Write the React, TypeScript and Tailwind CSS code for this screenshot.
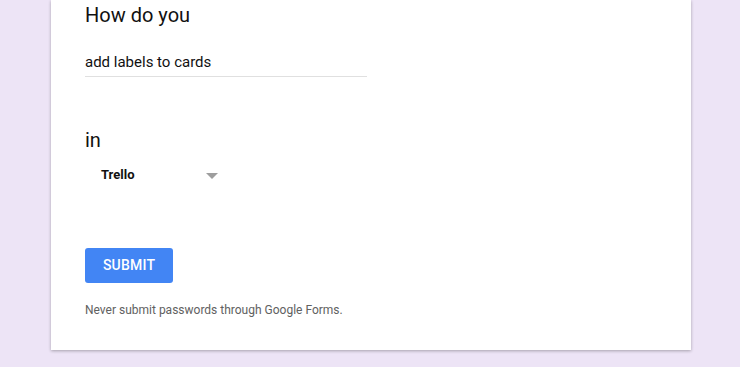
export default function App() {
  return (
    <div
      className="min-h-[367px] w-full bg-[#ede4f6] overflow-hidden"
      style={{ fontFamily: "Roboto, 'Liberation Sans', sans-serif" }}
    >
      <div className="ml-[51px] w-[640px] h-[350px] bg-white shadow-[0_1px_3px_rgba(0,0,0,0.3)] pl-[34px] flex flex-col">
        <div className="mt-[2px] h-[26px] text-[20px] leading-[26px] text-[#111]">How do you</div>
        <div className="mt-[22px] w-[282px] border-b border-[#e0e0e0] h-[27px]">
          <div className="text-[15px] leading-[24px] text-[#111]">add labels to cards</div>
        </div>
        <div className="mt-[50px] h-[26px] text-[20px] leading-[26px] text-[#111]">in</div>
        <div className="mt-[10px] h-[24px] flex items-center pl-[16px]">
          <span className="w-[105px] text-[13px] font-bold text-[#111]">Trello</span>
          <svg width="12" height="6" viewBox="0 0 12 6" className="mt-[1px]">
            <polygon points="0,0 12,0 6,6" fill="#9e9e9e" />
          </svg>
        </div>
        <button className="mt-[61px] w-[88px] h-[35px] rounded-[3px] bg-[#4285f4] text-white text-[14px] font-medium tracking-[0.2px]">
          SUBMIT
        </button>
        <div className="mt-[19px] text-[12px] leading-[16px] text-[#616161]">
          Never submit passwords through Google Forms.
        </div>
      </div>
    </div>
  );
}
